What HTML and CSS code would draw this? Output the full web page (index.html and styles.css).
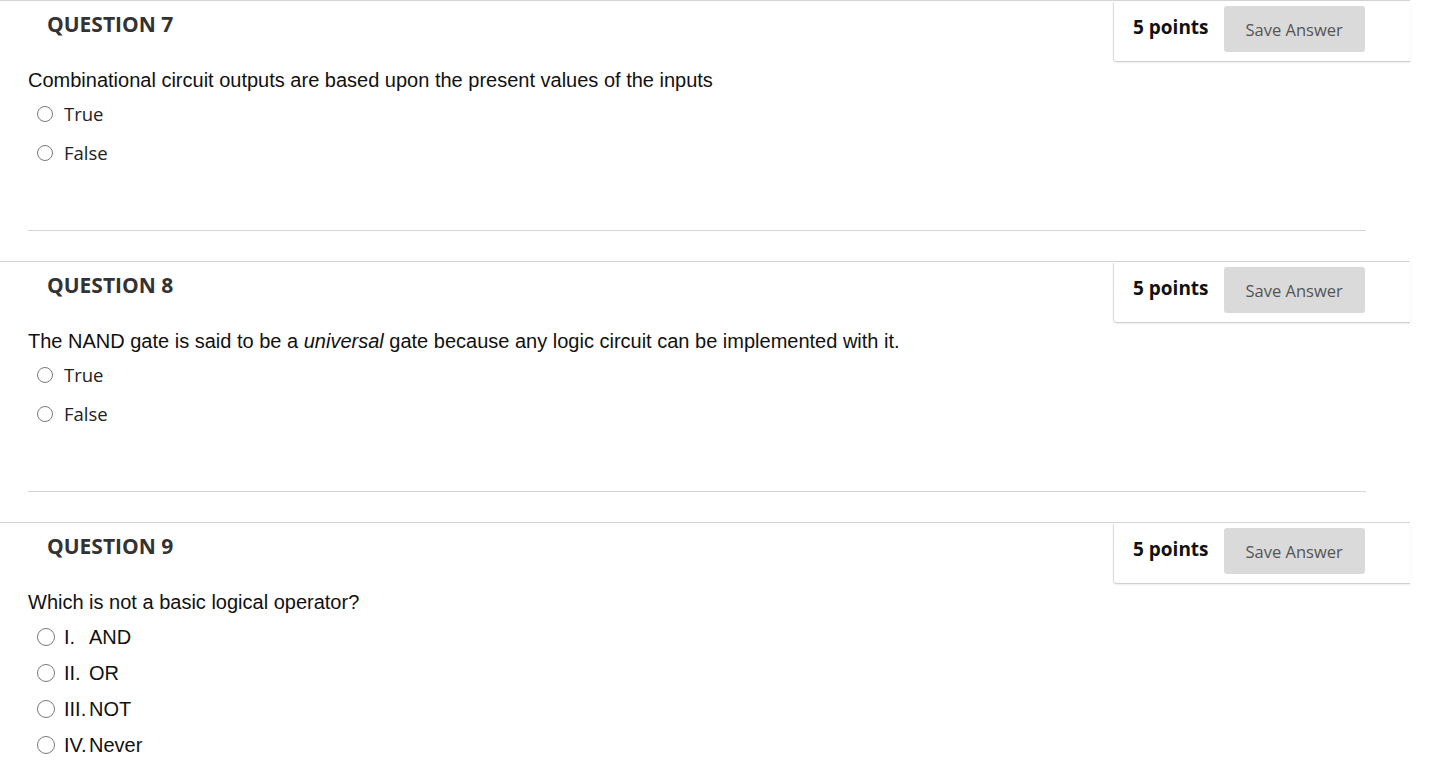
FILE: index.html
```html
<!DOCTYPE html>
<html lang="en">
<head>
    <meta charset="UTF-8">
    <title>Test</title>
    <link rel="stylesheet" href="styles.css">
</head>
<body>
    <div class="page">
        <div class="question">
            <div class="question-header">
                <h3 class="question-title">QUESTION 7</h3>
                <div class="points-box">
                    <span class="points">5 points</span>
                    <button class="save-btn">Save Answer</button>
                </div>
            </div>
            <p class="question-text">Combinational circuit outputs are based upon the present values of the inputs</p>
            <ul class="options">
                <li><span class="radio"></span>True</li>
                <li><span class="radio"></span>False</li>
            </ul>
            <hr class="separator">
        </div>

        <div class="question">
            <div class="question-header">
                <h3 class="question-title">QUESTION 8</h3>
                <div class="points-box">
                    <span class="points">5 points</span>
                    <button class="save-btn">Save Answer</button>
                </div>
            </div>
            <p class="question-text">The NAND gate is said to be a <em>universal</em> gate because any logic circuit can be implemented with it.</p>
            <ul class="options">
                <li><span class="radio"></span>True</li>
                <li><span class="radio"></span>False</li>
            </ul>
            <hr class="separator">
        </div>

        <div class="question">
            <div class="question-header">
                <h3 class="question-title">QUESTION 9</h3>
                <div class="points-box">
                    <span class="points">5 points</span>
                    <button class="save-btn">Save Answer</button>
                </div>
            </div>
            <p class="question-text">Which is not a basic logical operator?</p>
            <ul class="options options-numbered">
                <li><span class="radio"></span><span class="num">I.</span>AND</li>
                <li><span class="radio"></span><span class="num">II.</span>OR</li>
                <li><span class="radio"></span><span class="num">III.</span>NOT</li>
                <li><span class="radio"></span><span class="num">IV.</span>Never</li>
            </ul>
        </div>
    </div>
</body>
</html>
```

FILE: styles.css
```css
body {
    margin: 0;
    padding: 0;
    background: #fff;
    font-family: "Open Sans", sans-serif;
    color: #333;
}
.page {
    width: 1410px;
}
.question {
    height: 260px;
    border-top: 1px solid #d4d4d4;
}
.question-header {
    display: flex;
    justify-content: space-between;
    height: 61px;
}
.question-title {
    margin: 0;
    padding: 10px 0 0 47px;
    font-size: 21px;
    font-weight: bold;
    line-height: 27px;
    color: #333;
}
.points-box {
    display: flex;
    align-items: flex-start;
    width: 296px;
    height: 59px;
    margin-top: 1px;
    border-left: 1px solid #dcdcdc;
    border-bottom: 1px solid #d0d0d0;
    border-bottom-left-radius: 4px;
    box-shadow: 0 1px 2px rgba(0, 0, 0, 0.08);
}
.points {
    margin: 12px 0 0 19px;
    font-size: 19px;
    font-weight: bold;
    line-height: 26px;
    color: #111;
}
.save-btn {
    margin: 4px 0 0 15px;
    width: 141px;
    height: 46px;
    border: none;
    border-radius: 3px;
    background: #dadada;
    font-family: "Open Sans", sans-serif;
    font-size: 16.5px;
    color: #555;
    padding: 0;
}
.question-text {
    margin: 6px 0 0 28px;
    font-family: "Liberation Sans", Arial, sans-serif;
    font-size: 20px;
    line-height: 24px;
    color: #111;
}
.options {
    list-style: none;
    margin: 2px 0 0 0;
    padding: 0 0 0 37px;
}
.options li {
    display: flex;
    align-items: center;
    height: 39px;
    font-size: 18.5px;
    color: #222;
}
.radio {
    width: 14px;
    height: 14px;
    border: 1.5px solid #7a7a7a;
    border-radius: 50%;
    margin-right: 11px;
    flex-shrink: 0;
}
.options-numbered {
    margin-top: 5px;
}
.options-numbered li {
    height: 36px;
    font-family: "Liberation Sans", Arial, sans-serif;
    font-size: 20px;
    color: #111;
}
.options-numbered .radio {
    width: 16px;
    height: 16px;
    margin-right: 9px;
}
.num {
    display: inline-block;
    width: 25px;
}
.separator {
    margin: 58px 44px 0 28px;
    border: none;
    border-top: 1px solid #d4d4d4;
}
```
